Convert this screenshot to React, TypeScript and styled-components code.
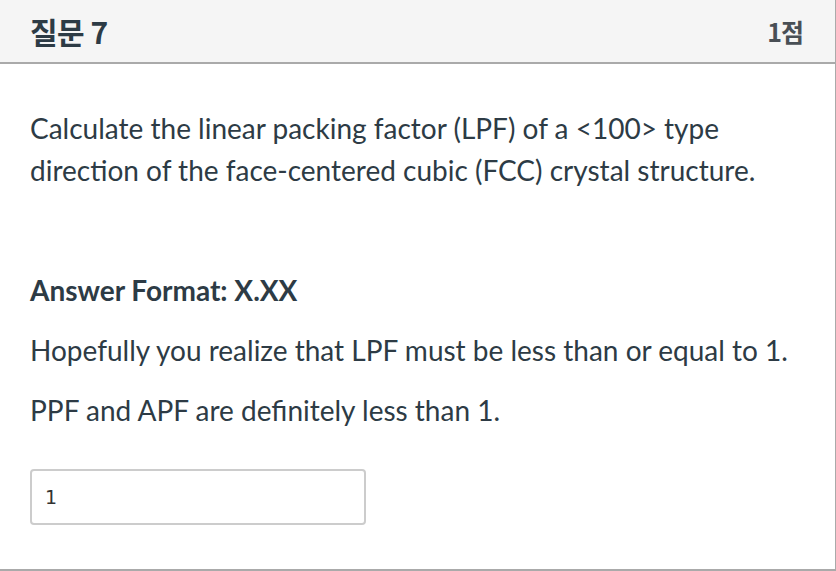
import styled, { createGlobalStyle } from "styled-components"

const GlobalStyle = createGlobalStyle`
  html, body {
    margin: 0;
    padding: 0;
    background: #ffffff;
  }
  body {
    font-family: Lato, "Noto Sans CJK KR", "Noto Sans", sans-serif;
    color: #2d3b45;
  }
`

const QuestionCard = styled.div`
  width: 836px;
  height: 571px;
  box-sizing: border-box;
  border-right: 1px solid #aaaaaa;
  border-bottom: 2px solid #aaaaaa;
  background: #ffffff;
`

const Header = styled.div`
  display: flex;
  align-items: center;
  justify-content: space-between;
  height: 62px;
  padding: 0 32px 0 30px;
  background: #f5f5f5;
  border-bottom: 2px solid #aaaaaa;
`

const HeaderText = styled.span<{ $right?: boolean }>`
  font-family: "Noto Sans CJK KR", Lato, sans-serif;
  font-weight: 700;
  font-size: ${(p) => (p.$right ? "25px" : "30px")};
  letter-spacing: ${(p) => (p.$right ? "-1px" : "-0.5px")};
  line-height: 1;
  color: ${(p) => (p.$right ? "#494f55" : "#2d3b45")};
`

const Body = styled.div`
  padding: 43px 30px 0 30px;
`

const Paragraph = styled.p<{ $bold?: boolean }>`
  margin: 0 0 18px 0;
  font-size: 28px;
  line-height: 42px;
  font-weight: ${(p) => (p.$bold ? 700 : 400)};
  color: #2d3b45;
`

const AnswerInput = styled.input`
  box-sizing: border-box;
  width: 336px;
  height: 56px;
  margin-top: 20px;
  padding: 0 13px;
  border: 2px solid #cccccc;
  border-radius: 4px;
  font-family: "DejaVu Sans", Lato, sans-serif;
  font-size: 19px;
  color: #333333;
  outline: none;
`

const App = () => {
  return (
    <>
      <GlobalStyle />
      <QuestionCard>
        <Header>
          <HeaderText>질문 7</HeaderText>
          <HeaderText $right>1점</HeaderText>
        </Header>
        <Body>
          <Paragraph>
            Calculate the linear packing factor (LPF) of a &lt;100&gt; type direction of the
            face-centered cubic (FCC) crystal structure.
          </Paragraph>
          <Paragraph>&nbsp;</Paragraph>
          <Paragraph $bold>Answer Format: X.XX</Paragraph>
          <Paragraph>Hopefully you realize that LPF must be less than or equal to 1.</Paragraph>
          <Paragraph>PPF and APF are definitely less than 1.</Paragraph>
          <AnswerInput type="text" defaultValue="1" />
        </Body>
      </QuestionCard>
    </>
  )
}

export default App
